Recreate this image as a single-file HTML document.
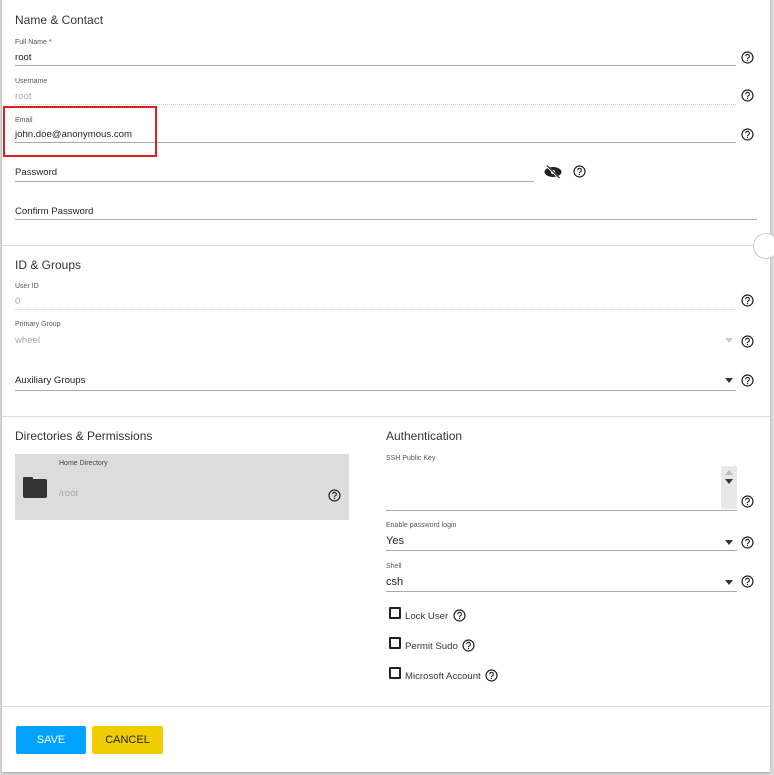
<!DOCTYPE html>
<html><head><meta charset="utf-8"><style>
*{margin:0;padding:0;box-sizing:border-box}
body{width:774px;height:775px;background:#d9d9d9;font-family:"Liberation Sans",Arial,sans-serif;position:relative;overflow:hidden}
.card{position:absolute;left:2px;top:0;width:768px;height:772px;background:#fff;box-shadow:0 1px 2px rgba(0,0,0,.25)}
.a{position:absolute}
.h{font-size:12px;color:#333}
.lbl{font-size:7px;color:#555}
.val{font-size:9.6px;color:#222}
.dis{color:#aaa}
.ln{height:1px;background:#aaa}
.dot{border-top:1px dotted #ccc;height:0}
.sep{height:1px;background:#ddd}
.q{position:absolute;width:13px;height:13px}
.arr{position:absolute;width:0;height:0;border-left:4px solid transparent;border-right:4px solid transparent;border-top:5px solid #333}
.cb{position:absolute;width:12px;height:12px;border:2px solid #222;border-radius:1px}
.btn{position:absolute;font-size:11px;text-align:center;line-height:28px;border-radius:2px}
</style></head><body>
<div class="card"></div>
<svg width="0" height="0" style="position:absolute"><defs><symbol id="q" viewBox="0 0 14 14"><circle cx="7" cy="7" r="5.9" fill="none" stroke="#222" stroke-width="1.3"/><path d="M5 5.6a2 2 0 1 1 2.8 1.8c-.6.3-.8.6-.8 1.3" fill="none" stroke="#222" stroke-width="1.1"/><circle cx="7" cy="10.2" r=".75" fill="#222"/></symbol></defs></svg>

<div class="a h" style="left:15px;top:13px">Name &amp; Contact</div>
<div class="a lbl" style="left:15px;top:39px">Full Name *</div>
<div class="a val" style="left:15px;top:52px">root</div>
<div class="a ln" style="left:15px;top:65px;width:721px"></div>
<div class="a lbl" style="left:15px;top:78px">Username</div>
<div class="a val dis" style="left:15px;top:91px">root</div>
<div class="a dot" style="left:15px;top:104px;width:721px"></div>
<div class="a lbl" style="left:15px;top:117px">Email</div>
<div class="a val" style="left:15px;top:129px">john.doe@anonymous.com</div>
<div class="a ln" style="left:15px;top:142px;width:721px"></div>
<div class="a" style="left:3px;top:106px;width:154px;height:51px;border:2px solid #e0201f"></div>
<div class="a val" style="left:15px;top:167px">Password</div>
<div class="a ln" style="left:15px;top:181px;width:519px"></div>
<svg class="a" style="left:544px;top:165px" width="18" height="14" viewBox="0 0 18 14"><ellipse cx="9" cy="7" rx="8.5" ry="5" fill="#222"/><circle cx="9" cy="7" r="2" fill="#fff"/><line x1="3" y1="1" x2="15" y2="13" stroke="#fff" stroke-width="2.2"/><line x1="3" y1="0.5" x2="15.5" y2="13" stroke="#222" stroke-width="1.2"/></svg>
<div class="a val" style="left:15px;top:206px">Confirm Password</div>
<div class="a ln" style="left:15px;top:219px;width:742px"></div>
<div class="a sep" style="left:2px;top:245px;width:768px"></div>
<div class="a" style="left:753px;top:233px;width:26px;height:26px;border:1px solid #ccc;border-radius:50%;background:#fff"></div>

<div class="a h" style="left:15px;top:258px">ID &amp; Groups</div>
<div class="a lbl" style="left:15px;top:283px">User ID</div>
<div class="a val dis" style="left:15px;top:296px">0</div>
<div class="a dot" style="left:15px;top:309px;width:721px"></div>
<div class="a lbl" style="left:15px;top:321px">Primary Group</div>
<div class="a val dis" style="left:15px;top:335px">wheel</div>
<div class="arr" style="left:725px;top:338px;border-top-color:#ccc"></div>
<div class="a val" style="left:15px;top:375px">Auxiliary Groups</div>
<div class="arr" style="left:725px;top:378px"></div>
<div class="a ln" style="left:15px;top:390px;width:721px"></div>
<div class="a sep" style="left:2px;top:416px;width:768px"></div>

<div class="a h" style="left:15px;top:429px">Directories &amp; Permissions</div>
<div class="a" style="left:15px;top:454px;width:334px;height:66px;background:#dcdcdc"></div>
<div class="a" style="left:23px;top:479px;width:24px;height:19px;background:#333;border-radius:2px"></div>
<div class="a" style="left:23px;top:477px;width:10px;height:4px;background:#333;border-radius:1px"></div>
<div class="a lbl" style="left:59px;top:460px;color:#444">Home Directory</div>
<div class="a val dis" style="left:59px;top:488px">/root</div>

<div class="a h" style="left:386px;top:429px">Authentication</div>
<div class="a lbl" style="left:386px;top:455px">SSH Public Key</div>
<div class="a" style="left:721px;top:466px;width:16px;height:43px;background:#e8e8e8"></div>
<div class="arr" style="left:725px;top:479px"></div>
<div class="a" style="left:725px;top:470px;width:0;height:0;border-left:4px solid transparent;border-right:4px solid transparent;border-bottom:5px solid #bbb"></div>
<div class="a ln" style="left:386px;top:510px;width:351px"></div>
<div class="a lbl" style="left:386px;top:522px">Enable password login</div>
<div class="a val" style="left:386px;top:535px;font-size:11px">Yes</div>
<div class="arr" style="left:725px;top:540px"></div>
<div class="a ln" style="left:386px;top:550px;width:351px"></div>
<div class="a lbl" style="left:386px;top:563px">Shell</div>
<div class="a val" style="left:386px;top:576px;font-size:11px">csh</div>
<div class="arr" style="left:725px;top:580px"></div>
<div class="a ln" style="left:386px;top:591px;width:351px"></div>
<div class="cb" style="left:389px;top:607px"></div>
<div class="a val" style="left:405px;top:611px;color:#333">Lock User</div>
<div class="cb" style="left:389px;top:637px"></div>
<div class="a val" style="left:405px;top:641px;color:#333">Permit Sudo</div>
<div class="cb" style="left:389px;top:667px"></div>
<div class="a val" style="left:405px;top:671px;color:#333">Microsoft Account</div>

<div class="a sep" style="left:2px;top:706px;width:768px"></div>
<div class="btn" style="left:16px;top:726px;width:70px;background:#00a2ff;color:#fff">SAVE</div>
<div class="btn" style="left:92px;top:726px;width:71px;background:#f0cd00;color:#222">CANCEL</div>

<svg class="q" style="left:741px;top:51px"><use href="#q"/></svg>
<svg class="q" style="left:741px;top:89px"><use href="#q"/></svg>
<svg class="q" style="left:741px;top:128px"><use href="#q"/></svg>
<svg class="q" style="left:573px;top:165px"><use href="#q"/></svg>
<svg class="q" style="left:741px;top:294px"><use href="#q"/></svg>
<svg class="q" style="left:741px;top:335px"><use href="#q"/></svg>
<svg class="q" style="left:741px;top:374px"><use href="#q"/></svg>
<svg class="q" style="left:328px;top:489px"><use href="#q"/></svg>
<svg class="q" style="left:741px;top:495px"><use href="#q"/></svg>
<svg class="q" style="left:741px;top:536px"><use href="#q"/></svg>
<svg class="q" style="left:741px;top:575px"><use href="#q"/></svg>
<svg class="q" style="left:453px;top:609px"><use href="#q"/></svg>
<svg class="q" style="left:462px;top:639px"><use href="#q"/></svg>
<svg class="q" style="left:485px;top:669px"><use href="#q"/></svg>
</body></html>
